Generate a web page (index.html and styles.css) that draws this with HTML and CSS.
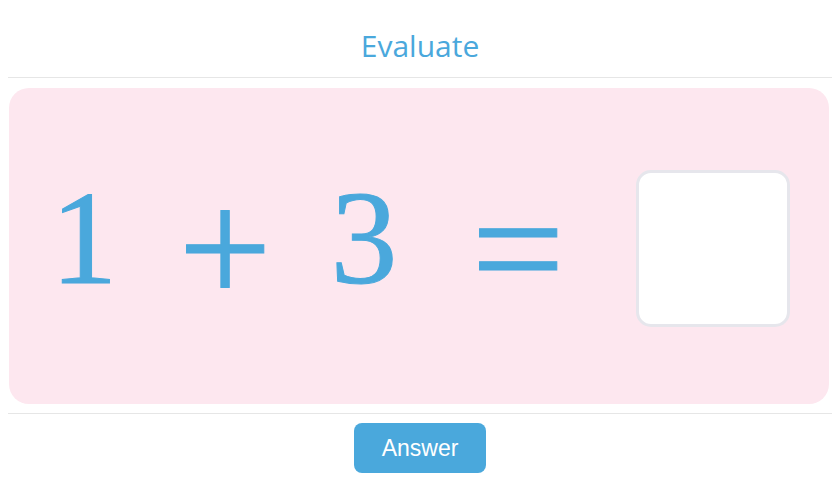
FILE: index.html
```html
<!DOCTYPE html>
<html>
<head>
<meta charset="utf-8">
<link rel="stylesheet" href="styles.css">
</head>
<body>
<div class="header"><h1 class="title">Evaluate</h1></div>
<div class="card">
  <div class="row">
    <span class="tok">1</span>
    <span class="tok op">+</span>
    <span class="tok">3</span>
    <span class="tok op">=</span>
    <span class="slot"><span class="box"></span></span>
  </div>
</div>
<div class="footer"><button class="answer">Answer</button></div>
</body>
</html>
```
FILE: styles.css
```css
html, body { background: #ffffff; }
body { margin: 8px; }
.header {
  height: 69px;
  border-bottom: 1px solid #e6e6e6;
  display: flex;
  align-items: center;
  justify-content: center;
}
.title {
  margin: 0;
  font-family: "Open Sans", sans-serif;
  font-weight: 400;
  font-size: 30px;
  color: #4aa8dc;
  padding-top: 6px;
}
.card {
  margin: 10px 3px 0 1px;
  height: 316px;
  background: #fde7ef;
  border-radius: 20px;
  display: flex;
  align-items: center;
}
.row {
  display: grid;
  grid-template-columns: 140px 142px 136px 172px 218px;
  align-items: center;
  justify-items: center;
  padding-left: 5px;
}
.tok {
  font-family: "Liberation Serif", "Times New Roman", serif;
  font-size: 134px;
  line-height: 1;
  color: #4aa8dc;
  padding-bottom: 17px;
  -webkit-text-stroke: 1px #4aa8dc;
}
.tok.op {
  font-size: 166px;
  padding-bottom: 0;
  padding-top: 4px;
}
.slot { padding-top: 4px; }
.box {
  display: block;
  width: 148px;
  height: 151px;
  background: #ffffff;
  border: 3px solid #e6e6ec;
  border-radius: 15px;
}
.footer {
  margin-top: 9px;
  border-top: 1px solid #e6e6e6;
  padding-top: 9px;
  display: flex;
  justify-content: center;
}
.answer {
  width: 132px;
  height: 50px;
  border: none;
  border-radius: 8px;
  background: #4aa8dc;
  color: #ffffff;
  font-family: "Liberation Sans", Arial, sans-serif;
  font-size: 23px;
  padding: 0;
}
```
